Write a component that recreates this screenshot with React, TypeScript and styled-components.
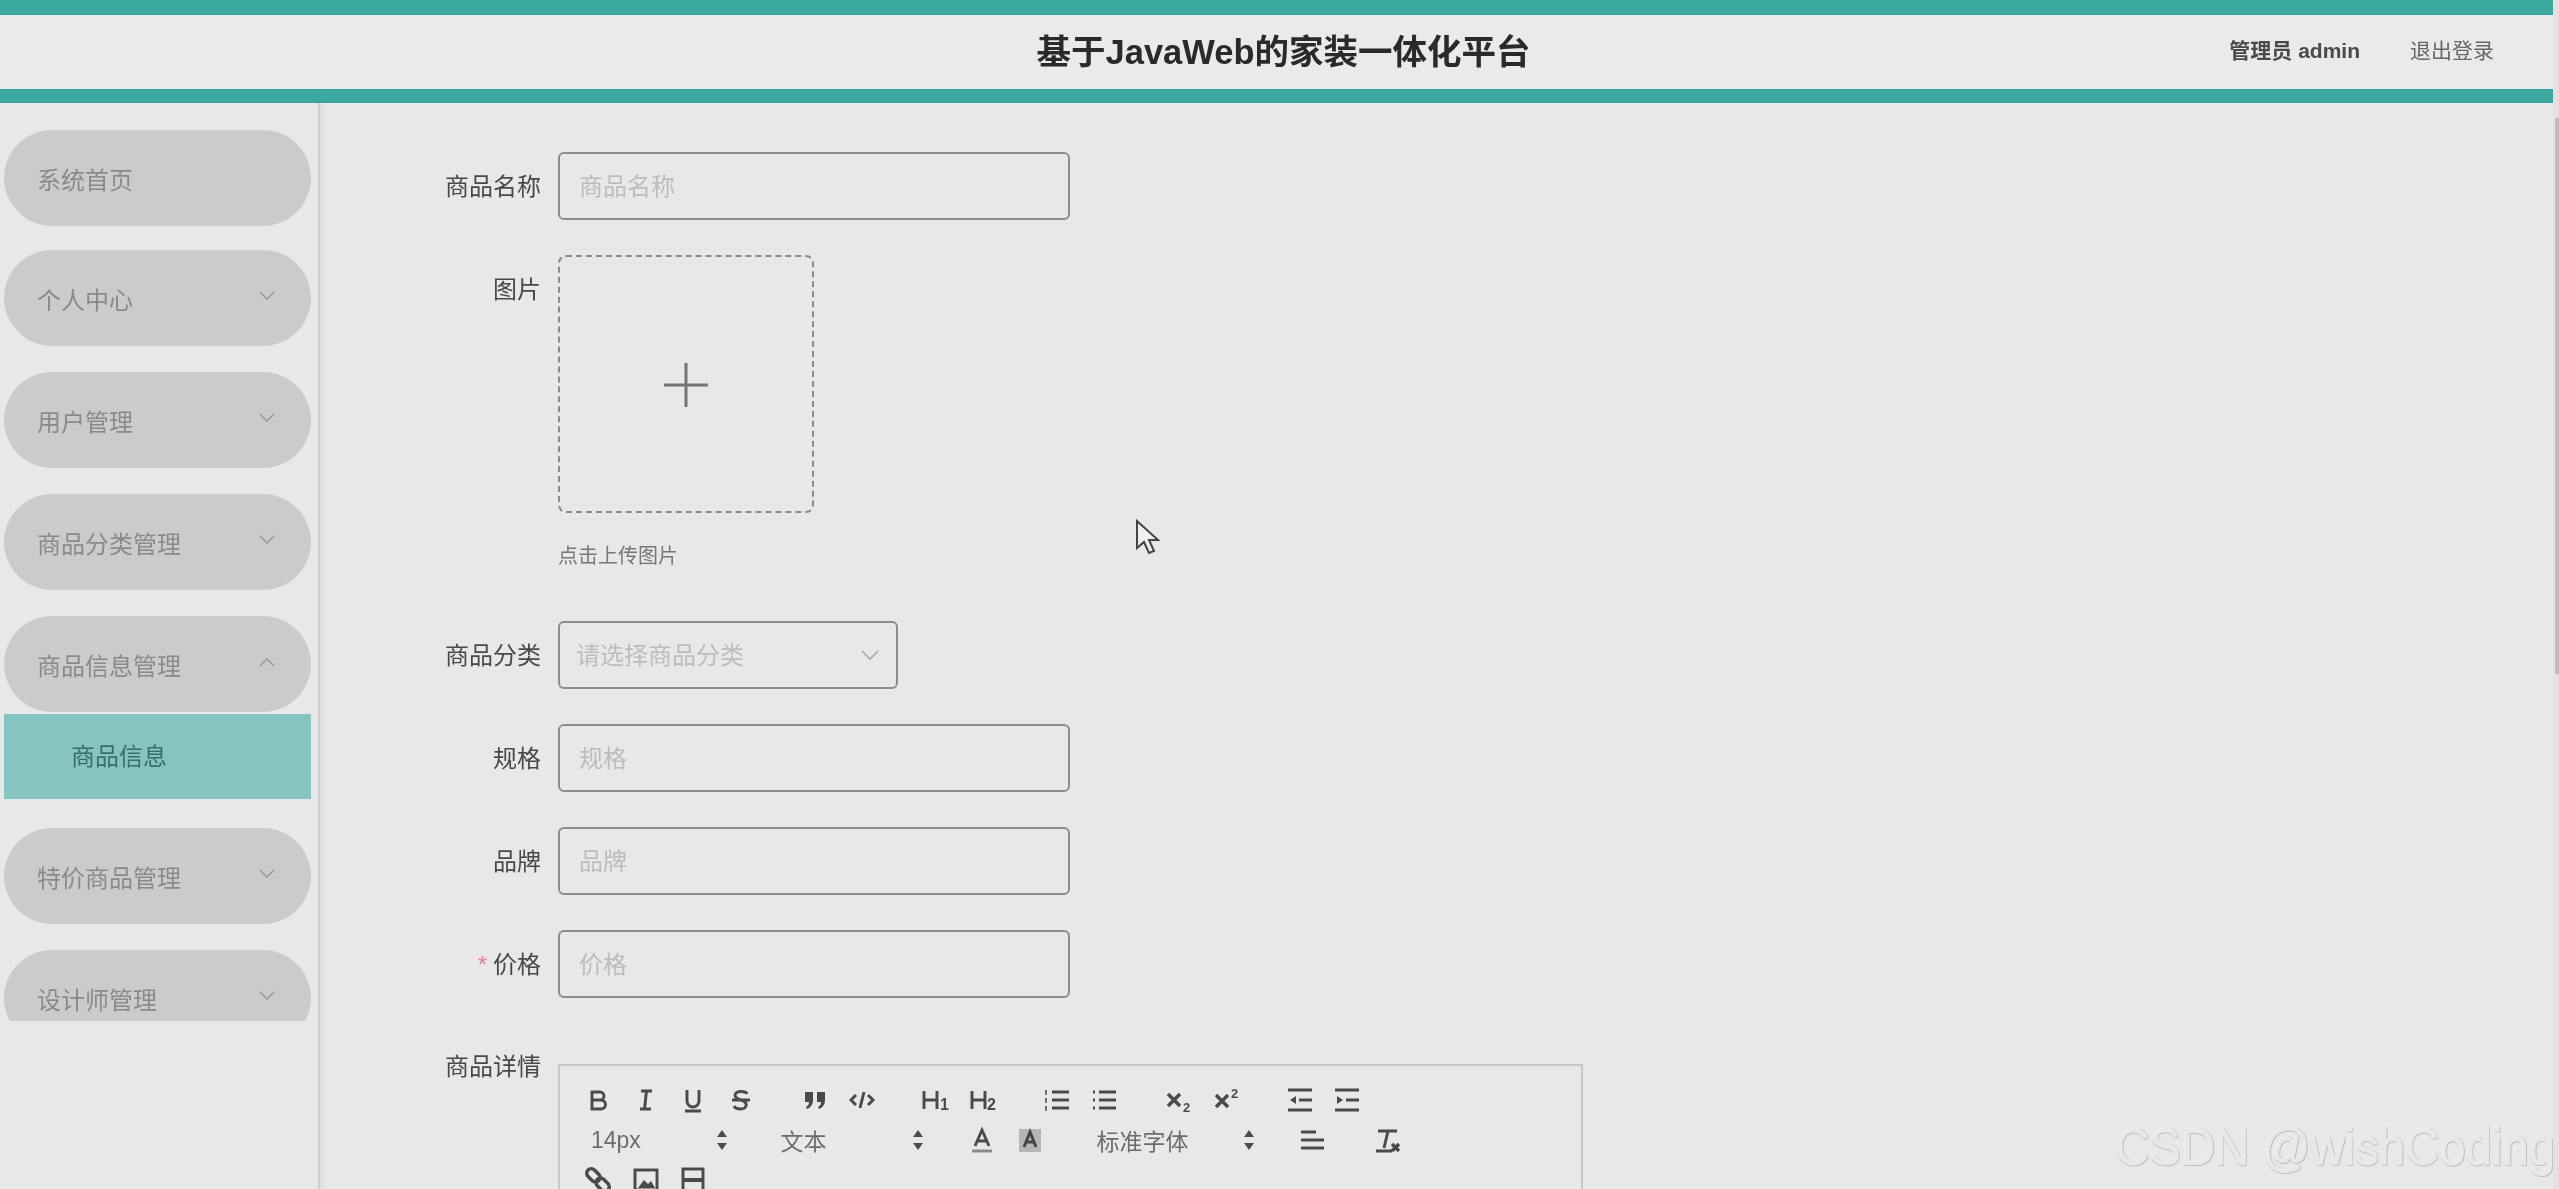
import React from 'react';
import styled, { createGlobalStyle } from 'styled-components';

const Global = createGlobalStyle`
  html, body { margin: 0; padding: 0; height: 100%; overflow: hidden; background: #e8e8e8; }
  * { box-sizing: border-box; }
  #root { font-family: "Liberation Sans", "Noto Sans CJK SC", sans-serif; }
`;

const Page = styled.div`
  position: relative;
  width: 2559px;
  height: 1189px;
  overflow: hidden;
  background: #e8e8e8;
  filter: blur(0.7px);
`;
const Main = styled.div`
  width: 2553px;
  height: 1189px;
  display: flex;
  flex-direction: column;
`;
const Header = styled.header`
  height: 103px;
  flex: none;
  display: grid;
  grid-template-columns: 1fr auto 1fr;
  align-items: center;
  background: #eaeaea;
  border-top: 15px solid #3ba99f;
  border-bottom: 14px solid #3ba99f;
`;
const Title = styled.h1`
  grid-column: 2;
  margin: 0 0 7px 14px;
  font-size: 34.5px;
  font-weight: 700;
  color: #2a2a2a;
`;
const HeaderRight = styled.div`
  grid-column: 3;
  justify-self: end;
  display: flex;
  gap: 50px;
  padding-right: 59px;
  font-size: 21px;
  margin-bottom: 7px;
`;
const User = styled.span`
  font-weight: 700;
  color: #4a4a4a;
`;
const Logout = styled.span`
  color: #666;
`;
const Body = styled.div`
  flex: 1;
  display: flex;
  min-height: 0;
`;
const Sidebar = styled.nav`
  width: 320px;
  flex: none;
  border-right: 2px solid #cfcfcf;
  box-shadow: 3px 0 6px rgba(0,0,0,.06);
  padding: 27px 0 0 4px;
`;
const MenuClip = styled.div`
  width: 307px;
  height: 891px;
  overflow: hidden;
`;
const Pill = styled.div<{ $mt: number }>`
  height: 96px;
  margin-top: ${p => p.$mt}px;
  border-radius: 48px;
  background: #cbcbcb;
  display: flex;
  align-items: center;
  justify-content: space-between;
  padding: 0 35px 0 33px;
  color: #8a8a8a;
  font-size: 24px;
`;
const Chevron = styled.svg`
  width: 18px;
  height: 12px;
  margin-top: -4px;
  fill: none;
  stroke: #9a9a9a;
  stroke-width: 1.6;
`;
const SubItem = styled.div`
  height: 85px;
  margin-top: 2px;
  background: #85c4c0;
  color: #3d6b6b;
  font-size: 24px;
  display: flex;
  align-items: center;
  padding: 0 0 5px 67px;
`;
const Content = styled.main`
  flex: 1;
  padding: 49px 0 0 0;
`;
const Row = styled.div<{ $mt?: number }>`
  display: flex;
  align-items: flex-start;
  margin-top: ${p => p.$mt ?? 0}px;
`;
const Label = styled.label<{ $dy?: number }>`
  width: 238px;
  flex: none;
  margin-top: ${p => Math.min(p.$dy ?? 19, 0)}px;
  padding: ${p => Math.max(p.$dy ?? 19, 0)}px 17px 0 0;
  line-height: 32px;
  text-align: right;
  font-size: 24px;
  color: #484848;
`;
const Star = styled.span`
  color: #d9868e;
  margin-right: 6px;
`;
const Input = styled.div<{ $w?: number; $pl?: number }>`
  width: ${p => p.$w ?? 512}px;
  height: 68px;
  border: 2px solid #8c8c8c;
  border-radius: 6px;
  padding: 0 0 4px ${p => p.$pl ?? 19}px;
  display: flex;
  align-items: center;
  justify-content: space-between;
  font-size: 24px;
  color: #bcbcbc;
`;
const SelectChevron = styled.svg`
  width: 20px;
  height: 12px;
  margin: 4px 16px 0 0;
  fill: none;
  stroke: #a8a8a8;
  stroke-width: 1.6;
`;
const UploadCol = styled.div`
  display: flex;
  flex-direction: column;
`;
const Upload = styled.div`
  width: 256px;
  height: 258px;
  border: 2px dashed #8a8a8a;
  border-radius: 8px;
  padding-top: 2px;
  display: flex;
  align-items: center;
  justify-content: center;
`;
const Plus = styled.svg`
  width: 46px;
  height: 46px;
  stroke: #757575;
  stroke-width: 3;
`;
const Hint = styled.div`
  margin-top: 29px;
  font-size: 20px;
  line-height: 28px;
  color: #777;
`;
const Editor = styled.div`
  width: 1025px;
  height: 160px;
  border: 2px solid #c8c8c8;
  border-bottom: none;
  padding: 13px 0 0 14px;
`;
const ToolRow = styled.div`
  display: flex;
  align-items: center;
  height: 40px;
  transform: translateY(1px);
`;
const Group = styled.div`
  display: flex;
  align-items: center;
  margin-right: 26.5px;
`;
const Tool = styled.svg`
  width: 47.5px;
  height: 30px;
  fill: none;
  stroke: #4a4a4a;
  stroke-width: 2.9;
`;
const Picker = styled.div<{ $w: number; $pl?: number }>`
  width: ${p => p.$w}px;
  display: flex;
  align-items: center;
  justify-content: space-between;
  padding: 0 8px 0 ${p => p.$pl ?? 17}px;
  font-size: 23px;
  color: #6c6c6c;
`;
const Arrows = styled.svg`
  width: 12px;
  height: 26px;
  fill: #4a4a4a;
`;
const Cursor = styled.svg`
  position: absolute;
  left: 1134px;
  top: 518px;
  width: 26px;
  height: 38px;
  fill: #f0f0f0;
  stroke: #444;
  stroke-width: 2;
`;
const Watermark = styled.div`
  position: absolute;
  right: 4px;
  top: 1117px;
  font-size: 52px;
  line-height: 60px;
  white-space: nowrap;
  transform: scaleX(0.91);
  transform-origin: right center;
  color: #e8e8e8;
  text-shadow: -1px -1px 0 #eeeeee, 1px 1px 0 #c0c0c0, 1px -1px 0 #d4d4d4, -1px 1px 0 #d4d4d4;
`;
const ScrollTrack = styled.div`
  position: absolute;
  right: 0;
  top: 0;
  width: 6px;
  height: 1189px;
  padding: 118px 0 0 2px;
  background: #e2e2e2;
`;
const ScrollThumb = styled.div`
  width: 4px;
  height: 556px;
  background: #bdbdbd;
`;

const Down = () => <Chevron viewBox="0 0 18 12"><path d="M2 2l7 7 7-7" /></Chevron>;
const Up = () => <Chevron viewBox="0 0 18 12"><path d="M2 10l7-7 7 7" /></Chevron>;

const menu: { t: string; mt: number; icon?: 'down' | 'up' }[] = [
  { t: '系统首页', mt: 0 },
  { t: '个人中心', mt: 24, icon: 'down' },
  { t: '用户管理', mt: 26, icon: 'down' },
  { t: '商品分类管理', mt: 26, icon: 'down' },
  { t: '商品信息管理', mt: 26, icon: 'up' },
];

const Arr = () => <Arrows viewBox="0 0 12 26"><path d="M6 3l5 7H1zM6 23l5-7H1z" /></Arrows>;

const T = ({ children }: { children: React.ReactNode }) => <Tool viewBox="0 0 47.5 30">{children}</Tool>;
const Txt = styled.text<{ $s: number }>`
  font-family: "Liberation Sans", sans-serif;
  font-size: ${p => p.$s}px;
  font-weight: 700;
  fill: #4a4a4a;
  stroke: none;
`;

export default function App() {
  return (
    <Page>
      <Global />
      <Main>
        <Header>
          <Title>基于JavaWeb的家装一体化平台</Title>
          <HeaderRight>
            <User>管理员 admin</User>
            <Logout>退出登录</Logout>
          </HeaderRight>
        </Header>
        <Body>
          <Sidebar>
            <MenuClip>
              {menu.map(m => (
                <Pill key={m.t} $mt={m.mt}>
                  <span>{m.t}</span>
                  {m.icon === 'down' && <Down />}
                  {m.icon === 'up' && <Up />}
                </Pill>
              ))}
              <SubItem>商品信息</SubItem>
              <Pill $mt={29}><span>特价商品管理</span><Down /></Pill>
              <Pill $mt={26}><span>设计师管理</span><Down /></Pill>
            </MenuClip>
          </Sidebar>
          <Content>
            <Row>
              <Label>商品名称</Label>
              <Input>商品名称</Input>
            </Row>
            <Row $mt={35}>
              <Label $dy={19}>图片</Label>
              <UploadCol>
                <Upload>
                  <Plus viewBox="0 0 46 46"><path d="M23 1v44M1 23h44" /></Plus>
                </Upload>
                <Hint>点击上传图片</Hint>
              </UploadCol>
            </Row>
            <Row $mt={51}>
              <Label>商品分类</Label>
              <Input $w={340} $pl={16}>
                <span>请选择商品分类</span>
                <SelectChevron viewBox="0 0 20 12"><path d="M2 2l8 8 8-8" /></SelectChevron>
              </Input>
            </Row>
            <Row $mt={35}>
              <Label>规格</Label>
              <Input>规格</Input>
            </Row>
            <Row $mt={35}>
              <Label>品牌</Label>
              <Input>品牌</Input>
            </Row>
            <Row $mt={35}>
              <Label><Star>*</Star>价格</Label>
              <Input>价格</Input>
            </Row>
            <Row $mt={66}>
              <Label $dy={-13}>商品详情</Label>
              <Editor>
                <ToolRow>
                  <Group>
                    <T><path d="M18 7h8a4 4 0 0 1 0 8h-8zM18 15h9a4.500 4.500 0 0 1 0 9h-9z" /></T>
                    <T><path d="M19 6h11M18 24h11M24.500 6l-2 18" /></T>
                    <T><path d="M18 5v11a6 6 0 0 0 12 0V5M16 26h16" /></T>
                    <T><path d="M30 9c-1-3-11-4-12 1 0 2 3 4 6 5s6 3 5 6c-1 4-10 4-12 0M15 15h18" /></T>
                  </Group>
                  <Group>
                    <T><path fill="#4a4a4a" stroke="none" d="M14 7h8v8c0 5-3 8-6 9l-1-2c2-1 3-3 3-5h-4zM26 7h8v8c0 5-3 8-6 9l-1-2c2-1 3-3 3-5h-4z" /></T>
                    <T><path d="M18 10l-5 5 5 5M30 10l5 5-5 5M26 7l-4 16" /></T>
                  </Group>
                  <Group>
                    <T><path d="M12 6v18M25 6v18M12 15h13" /><Txt $s={16} x="28" y="25">1</Txt></T>
                    <T><path d="M12 6v18M25 6v18M12 15h13" /><Txt $s={16} x="27" y="25">2</Txt></T>
                  </Group>
                  <Group>
                    <T><path d="M18 7h17M18 15h17M18 23h17" /><path strokeWidth="1.500" d="M12 5v5M12 13v5M12 21v5" /></T>
                    <T><path d="M18 7h17M18 15h17M18 23h17M12 7h2M12 15h2M12 23h2" /></T>
                  </Group>
                  <Group>
                    <T><path strokeWidth="3.500" d="M13 9l12 12M25 9L13 21" /><Txt $s={13} x="28" y="27">2</Txt></T>
                    <T><path strokeWidth="3.500" d="M13 10l12 12M25 10L13 22" /><Txt $s={13} x="28" y="13">2</Txt></T>
                  </Group>
                  <Group>
                    <T><path d="M11 5h24M22 15h13M11 25h24" /><path fill="#4a4a4a" stroke="none" d="M13 15l6-4v8z" /></T>
                    <T><path d="M11 5h24M22 15h13M11 25h24" /><path fill="#4a4a4a" stroke="none" d="M19 15l-6-4v8z" /></T>
                  </Group>
                </ToolRow>
                <ToolRow>
                  <Group>
                    <Picker $w={162}><span>14px</span><Arr /></Picker>
                  </Group>
                  <Group>
                    <Picker $w={169} $pl={18}><span>文本</span><Arr /></Picker>
                  </Group>
                  <Group>
                    <T><path d="M17 21l7-16 7 16M19.500 16h9" /><path stroke="#8a8a8a" d="M14 26h20" /></T>
                    <T><rect x="13" y="4" width="22" height="23" fill="#b5b5b5" stroke="none" /><path stroke="#444" d="M18 22l6-15 6 15M20 17h8" /></T>
                  </Group>
                  <Group>
                    <Picker $w={183}><span>标准字体</span><Arr /></Picker>
                  </Group>
                  <Group>
                    <T><path d="M12 7h15M12 15h23M12 23h23" /></T>
                  </Group>
                  <Group>
                    <T><path d="M15 6h19M25 6l-4 17M13 26h16" /><path strokeWidth="3.500" d="M29 19l7 7M36 19l-7 7" /></T>
                  </Group>
                </ToolRow>
                <ToolRow>
                  <T>
                    <g transform="rotate(45 24 15)" strokeWidth="3.500">
                      <rect x="10" y="10.500" width="15" height="9" rx="4.500" />
                      <rect x="23" y="10.500" width="15" height="9" rx="4.500" />
                    </g>
                  </T>
                  <T><rect x="13" y="5" width="22" height="20" /><path fill="#4a4a4a" stroke="none" d="M16 23l6-8 4 4 3-3 4 7z" /></T>
                  <T><rect x="14" y="4" width="20" height="22" /><path fill="#4a4a4a" stroke="none" d="M14 13h20v4H14z" /></T>
                </ToolRow>
              </Editor>
            </Row>
          </Content>
        </Body>
      </Main>
      <Cursor viewBox="0 0 26 38"><path d="M3 3v27l7-6 5 11 5-2-5-11h9z" /></Cursor>
      <Watermark>CSDN @wishCoding</Watermark>
      <ScrollTrack><ScrollThumb /></ScrollTrack>
    </Page>
  );
}
